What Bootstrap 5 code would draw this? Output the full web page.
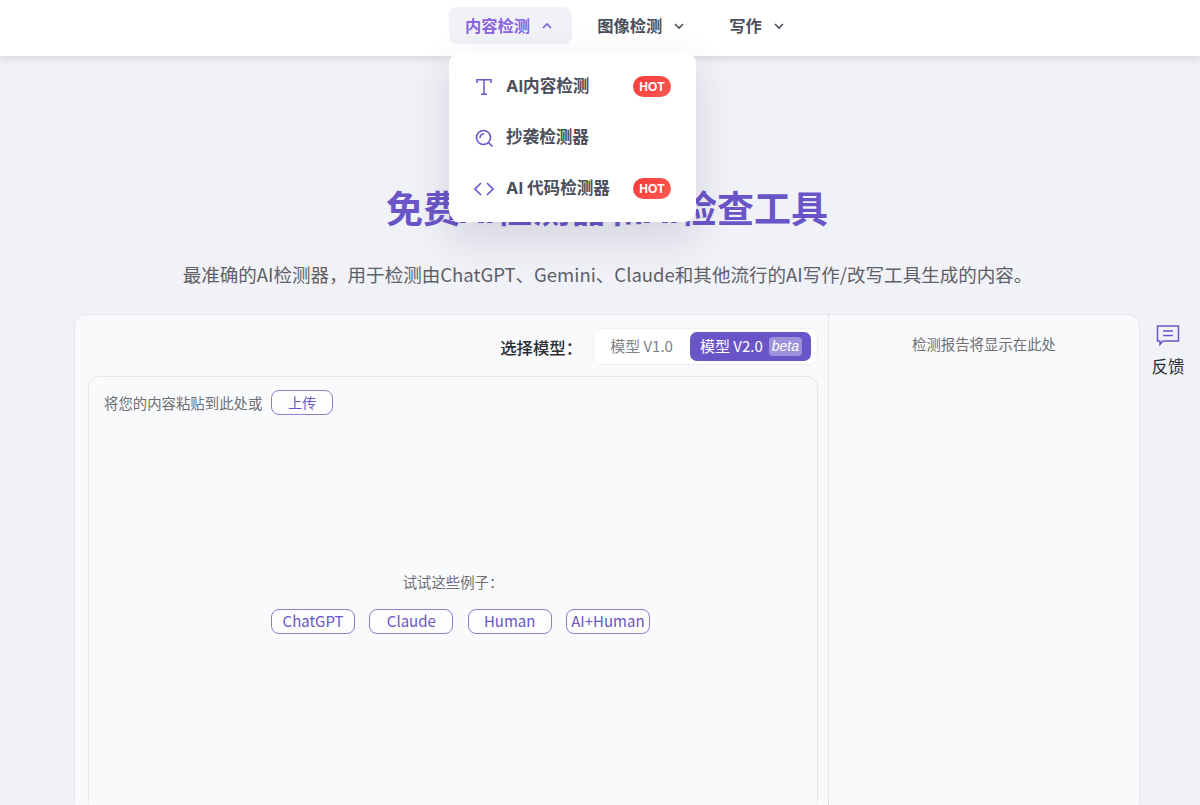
<!DOCTYPE html>
<html lang="zh"><head><meta charset="utf-8"><title>AI</title>
<link rel="stylesheet" href="https://cdn.jsdelivr.net/npm/bootstrap@5.3.0/dist/css/bootstrap.min.css">
<style>
html,body{height:805px;overflow:hidden}
body{background:#f1f2f7;font-family:"Noto Sans CJK SC","Noto Sans",sans-serif;color:#5d5f66}
.topbar{height:56px;background:#fff;box-shadow:0 2px 8px rgba(30,30,60,.14);padding-left:449px;gap:9px}
.topitem{font-size:16.3px;font-weight:700;color:#4b4f5c;height:37px;margin-top:7px;padding:0 19px 0 16px;border-radius:8px;gap:11px;line-height:1}
.topitem.on{background:#f1f2f7;color:#8a63e0}
.dropmenu{position:absolute;left:449px;top:52px;width:247px;height:170px;background:#fff;border-radius:12px;box-shadow:0 16px 40px rgba(40,40,80,.15);z-index:5;padding:9px 25px}
.dropitem{height:51px;gap:12px;font-family:Inter,"Noto Sans CJK SC",sans-serif;font-size:16.6px;font-weight:700;color:#4b4f5c}
.hotpill{background:linear-gradient(135deg,#f93a3a,#fd5a52);color:#fff;font-size:12px;font-weight:700;font-family:"Liberation Sans",sans-serif;border-radius:11px;width:38px;height:21px;margin-left:auto}
.herotitle{font-size:37px;font-weight:700;color:#6a55c8;margin:0;padding:126px 0 0 14px;line-height:50px}
.herosub{font-size:18.55px;color:#5e6067;margin:0;padding:29px 0 0 15px;line-height:26px}
.mainpanel{margin:27px 0 0 74px;width:1066px;height:600px;background:#fafafc;border:1px dotted #d4d5dc;border-radius:12px}
.leftcol{width:754px;border-right:1px dotted #d4d5dc;padding:13px 10px 0 14px}
.modellabel{font-size:16.4px;font-weight:500;color:#2c2e35;margin-right:11px;padding-top:1px}
.modelswitch{background:#fff;border:1px dotted #dcdde3;border-radius:9px;height:37px;padding:3px 6px 3px 4px;gap:5px}
.modelbtn{font-size:15px;color:#808186;padding:0 12px;height:29px;border-radius:7px;white-space:nowrap}
.modelbtn.on{background:#6a55c8;color:#fff;padding:0 9px 0 10px;gap:6px}
.betatag{background:rgba(255,255,255,.35);font-family:"Liberation Sans",sans-serif;font-style:italic;font-size:14px;line-height:19px;padding:0 3px;border-radius:4px}
.inputbox{margin-top:11px;margin-left:-1px;height:500px;border:1px dotted #d4d5dc;border-radius:12px;background:#f9fafc;padding:13px 15px 0 15px}
.hinttext{font-size:14.4px;color:#6e6f74}
.outlinebtn{border:1px solid #8a7fd0;color:#6a55c8;border-radius:8px;background:#fdfdfe;font-size:14px;height:25px;width:62px;margin-left:9px}
.examplelabel{padding-top:156px}
.examplerow{gap:14.3px;margin-top:16px;padding-left:15px}
.examplebtn{border:1px solid #8a7fd0;color:#6a55c8;border-radius:8px;background:#fdfdfe;font-size:15px;height:25px;width:84px}
.rightcol{flex:1;padding-top:18px;font-size:14.4px;color:#6e6f74;text-align:center}
.feedback{position:absolute;left:1140px;top:325px;width:56px;font-size:16.5px;color:#2c2e35;gap:10px;line-height:1.1}
</style></head>
<body>
<div class="topbar d-flex">
  <div class="topitem on d-flex align-items-center">内容检测<svg width="12" height="8" viewBox="0 0 12 8"><path d="M2 6l4-4 4 4" fill="none" stroke="#7a62d8" stroke-width="1.6"/></svg></div>
  <div class="topitem d-flex align-items-center">图像检测<svg width="12" height="8" viewBox="0 0 12 8"><path d="M2 2l4 4 4-4" fill="none" stroke="#4b4f5c" stroke-width="1.6"/></svg></div>
  <div class="topitem d-flex align-items-center">写作<svg width="12" height="8" viewBox="0 0 12 8"><path d="M2 2l4 4 4-4" fill="none" stroke="#4b4f5c" stroke-width="1.6"/></svg></div>
</div>
<div class="dropmenu">
 <div class="dropitem d-flex align-items-center"><svg width="20" height="20" viewBox="0 0 20 20" fill="none" stroke="#6a55c8" stroke-width="1.5"><path d="M3 6V2.800h14V6M10 2.800v14.400M7 17.200h6"/></svg>AI内容检测<span class="hotpill d-flex align-items-center justify-content-center">HOT</span></div>
 <div class="dropitem d-flex align-items-center"><svg width="20" height="20" viewBox="0 0 20 20" fill="none" stroke="#6a55c8" stroke-width="1.6"><circle cx="9.500" cy="9.500" r="7"/><path d="M14.500 14.500l4 4M6 10a4 4 0 0 1 4-4"/></svg>抄袭检测器</div>
 <div class="dropitem d-flex align-items-center"><svg width="20" height="20" viewBox="0 0 20 20" fill="none" stroke="#6a55c8" stroke-width="1.6"><path d="M7 4L1 10l6 6M13 4l6 6-6 6"/></svg>AI 代码检测器<span class="hotpill d-flex align-items-center justify-content-center">HOT</span></div>
</div>
<h1 class="herotitle text-center">免费AI检测器和AI检查工具</h1>
<p class="herosub text-center">最准确的AI检测器，用于检测由ChatGPT、Gemini、Claude和其他流行的AI写作/改写工具生成的内容。</p>
<div class="mainpanel d-flex">
 <div class="leftcol">
  <div class="d-flex align-items-center justify-content-end">
   <span class="modellabel">选择模型：</span>
   <div class="modelswitch d-flex align-items-center">
    <span class="modelbtn d-flex align-items-center">模型 V1.0</span>
    <span class="modelbtn on d-flex align-items-center">模型 V2.0 <span class="betatag">beta</span></span>
   </div>
  </div>
  <div class="inputbox">
   <div class="d-flex align-items-center"><span class="hinttext">将您的内容粘贴到此处或</span><button class="outlinebtn d-flex align-items-center justify-content-center p-0">上传</button></div>
   <div class="text-center hinttext examplelabel">试试这些例子：</div>
   <div class="d-flex justify-content-center examplerow">
    <button class="examplebtn p-0">ChatGPT</button><button class="examplebtn p-0">Claude</button><button class="examplebtn p-0">Human</button><button class="examplebtn p-0">AI+Human</button>
   </div>
  </div>
 </div>
 <div class="rightcol">检测报告将显示在此处</div>
</div>
<div class="feedback d-flex flex-column align-items-center">
 <svg width="24" height="22" viewBox="0 0 24 22" fill="none" stroke="#6a55c8" stroke-width="1.5"><path d="M1.500 1h21v15H7l-3 3.500V16H1.500zM7 6h10M7 10.500h10"/></svg>反馈
</div>
<script src="https://cdn.jsdelivr.net/npm/bootstrap@5.3.0/dist/js/bootstrap.bundle.min.js"></script>
</body></html>
